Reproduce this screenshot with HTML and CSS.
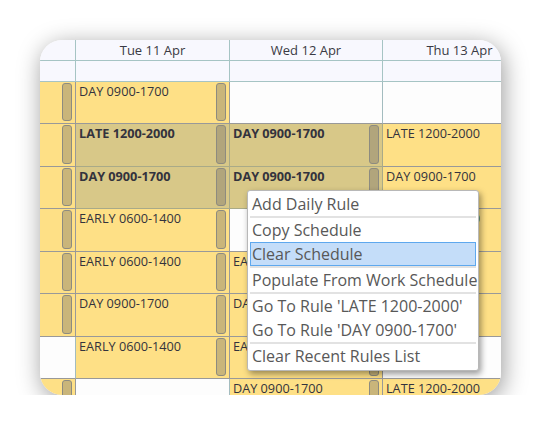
FILE: index.html
```html
<!DOCTYPE html>
<html lang="en">
<head>
    <meta charset="UTF-8">
    <meta name="viewport" content="width=device-width, initial-scale=1.0">
    <title>Schedule</title>
    <link rel="stylesheet" href="styles.css">
</head>
<body>
    <div class="card">
        <div class="grid">
            <!-- header -->
            <div class="cell head"></div>
            <div class="cell head">Tue 11 Apr</div>
            <div class="cell head">Wed 12 Apr</div>
            <div class="cell head">Thu 13 Apr</div>

            <div class="cell sub"></div>
            <div class="cell sub"></div>
            <div class="cell sub"></div>
            <div class="cell sub"></div>

            <!-- rows -->
            <div class="cell shift"><span class="txt"></span><span class="handle"></span></div>
            <div class="cell shift"><span class="txt">DAY 0900-1700</span><span class="handle"></span></div>
            <div class="cell empty"></div>
            <div class="cell empty"></div>

            <div class="cell shift"><span class="txt"></span><span class="handle"></span></div>
            <div class="cell shift sel"><span class="txt">LATE 1200-2000</span><span class="handle"></span></div>
            <div class="cell shift sel"><span class="txt">DAY 0900-1700</span><span class="handle"></span></div>
            <div class="cell shift"><span class="txt">LATE 1200-2000</span><span class="handle"></span></div>

            <div class="cell shift"><span class="txt"></span><span class="handle"></span></div>
            <div class="cell shift sel"><span class="txt">DAY 0900-1700</span><span class="handle"></span></div>
            <div class="cell shift sel"><span class="txt">DAY 0900-1700</span><span class="handle"></span></div>
            <div class="cell shift"><span class="txt">DAY 0900-1700</span><span class="handle"></span></div>

            <div class="cell shift"><span class="txt"></span><span class="handle"></span></div>
            <div class="cell shift"><span class="txt">EARLY 0600-1400</span><span class="handle"></span></div>
            <div class="cell empty"></div>
            <div class="cell shift"><span class="txt">LATE 1200-2000</span><span class="handle"></span></div>

            <div class="cell shift"><span class="txt"></span><span class="handle"></span></div>
            <div class="cell shift"><span class="txt">EARLY 0600-1400</span><span class="handle"></span></div>
            <div class="cell shift"><span class="txt">EARLY 0600-1400</span><span class="handle"></span></div>
            <div class="cell shift"><span class="txt">DAY 0900-1700</span><span class="handle"></span></div>

            <div class="cell shift"><span class="txt"></span><span class="handle"></span></div>
            <div class="cell shift"><span class="txt">DAY 0900-1700</span><span class="handle"></span></div>
            <div class="cell shift"><span class="txt">DAY 0900-1700</span><span class="handle"></span></div>
            <div class="cell shift"><span class="txt">DAY 0900-1700</span><span class="handle"></span></div>

            <div class="cell empty"></div>
            <div class="cell shift"><span class="txt">EARLY 0600-1400</span><span class="handle"></span></div>
            <div class="cell shift"><span class="txt">EARLY 0600-1400</span><span class="handle"></span></div>
            <div class="cell empty"></div>

            <div class="cell shift"><span class="txt"></span><span class="handle"></span></div>
            <div class="cell empty"></div>
            <div class="cell shift"><span class="txt">DAY 0900-1700</span><span class="handle"></span></div>
            <div class="cell shift"><span class="txt">LATE 1200-2000</span><span class="handle"></span></div>
        </div>

        <!-- context menu -->
        <div class="ctx-menu">
            <div class="item">Add Daily Rule</div>
            <div class="sep"></div>
            <div class="item">Copy Schedule</div>
            <div class="item active">Clear Schedule</div>
            <div class="sep"></div>
            <div class="item">Populate From Work Schedule</div>
            <div class="sep"></div>
            <div class="item">Go To Rule 'LATE 1200-2000'</div>
            <div class="item">Go To Rule 'DAY 0900-1700'</div>
            <div class="sep"></div>
            <div class="item">Clear Recent Rules List</div>
        </div>
    </div>
</body>
</html>
```

FILE: styles.css
```css
body {
    margin: 0;
    padding: 0;
    background-color: #ffffff;
    font-family: "Open Sans", Arial, sans-serif;
}

.card {
    position: relative;
    margin: 40px 0 0 40px;
    width: 461px;
    height: 355px;
    border-radius: 22px;
    overflow: hidden;
    background-color: #fdfdfd;
    box-shadow: 2px 5px 24px rgba(0, 0, 0, 0.4);
}

.grid {
    display: grid;
    grid-template-columns: 36px 154px 153px 154px;
    grid-template-rows: 21px 21px 42px 43px 42px 43px 42px 43px 42px 43px;
    width: 497px;
}

.cell {
    box-sizing: border-box;
    border-right: 1px solid #999;
    border-bottom: 1px solid #999;
    font-size: 12.7px;
    color: #33333d;
    overflow: hidden;
    white-space: nowrap;
}

.head {
    background-color: #f8f8fe;
    border-color: #a6c4c4;
    text-align: center;
    line-height: 20px;
    font-size: 13px;
    color: #3a3a44;
}

.sub {
    background-color: #f8f8fe;
    border-color: #a6c4c4;
}

.empty {
    background-color: #fdfdfd;
    border-right-color: #a3bcbf;
}

.shift {
    display: flex;
    background-color: #fee086;
    padding: 1px 3px 2px 3px;
}

.shift .txt {
    flex: 1;
    line-height: 17px;
}

.handle {
    width: 10px;
    box-sizing: border-box;
    border: 1px solid #8d8b80;
    border-radius: 3px;
    background-color: #c9b57a;
}

.sel {
    background-color: #d8c888;
    border-color: #a9aa88;
    font-weight: bold;
}

.sel .handle {
    background-color: #b1a57c;
}

/* context menu */
.ctx-menu {
    position: absolute;
    left: 207px;
    top: 150px;
    width: 232px;
    box-sizing: border-box;
    padding: 1px 0 2px 0;
    background-color: #ffffff;
    border: 1px solid #b8b8b8;
    border-radius: 3px;
    box-shadow: 2px 3px 6px rgba(0, 0, 0, 0.4);
}

.ctx-menu .item {
    margin: 0 2px;
    padding: 0 1px;
    border: 1px solid transparent;
    font-size: 16px;
    line-height: 22px;
    color: #585858;
    white-space: nowrap;
}

.ctx-menu .item.active {
    background-color: #c4ddf9;
    border-color: #5ea8ee;
}

.ctx-menu .sep {
    height: 2px;
    margin: 0 2px;
    background-color: #e2e2e2;
}
```
